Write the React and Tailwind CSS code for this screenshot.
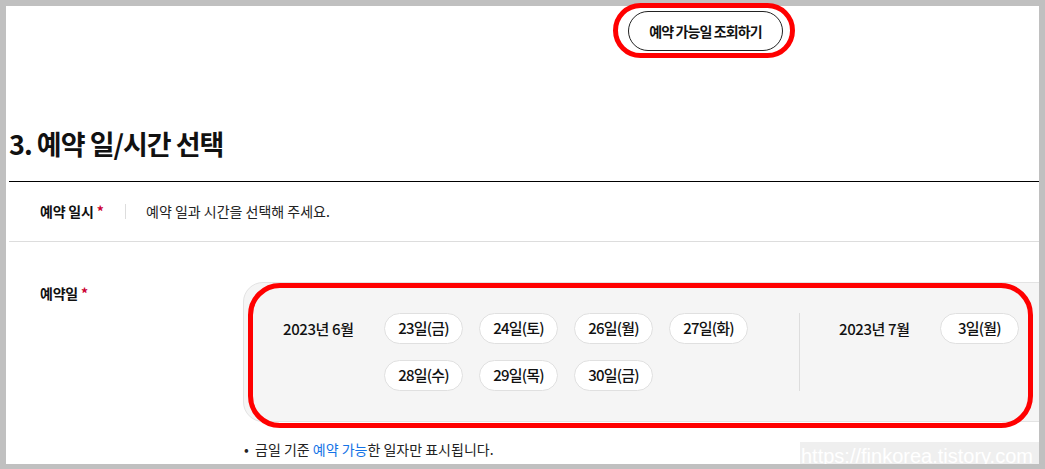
import React from "react";

const june = ["23일(금)", "24일(토)", "26일(월)", "27일(화)", "28일(수)", "29일(목)", "30일(금)"];
const july = ["3일(월)"];

function Chip({ label }) {
  return (
    <button className="h-[31px] w-[79px] rounded-full border border-[#e0e0e0] bg-white text-[15px] font-medium tracking-[-0.8px] text-[#111]">
      {label}
    </button>
  );
}

function Month({ title, days }) {
  return (
    <div className="flex shrink-0">
      <div className="w-[101px] shrink-0 text-[15px] font-medium leading-[31px] tracking-[-0.4px] text-[#111]">
        {title}
      </div>
      <div className="grid shrink-0 grid-cols-[repeat(4,79px)] gap-4">
        {days.map((d) => (
          <Chip key={d} label={d} />
        ))}
      </div>
    </div>
  );
}

export default function App() {
  return (
    <div className="relative h-[469px] w-[1045px] overflow-hidden bg-[#c0c0c0] pl-[6px] pt-[6px] font-['Noto_Sans_CJK_KR',sans-serif] text-[#111]">
      <div className="relative h-[458px] w-[1033px] overflow-hidden bg-white">
        <div className="pl-[622px] pt-[5px]">
          <button className="h-[40px] w-[155px] rounded-full border border-[#222] bg-white text-[14px] font-bold tracking-[-0.9px]">
            예약 가능일 조회하기
          </button>
        </div>

        <h2 className="mt-[75px] pl-[3px] text-[27px] font-bold leading-[36px] tracking-[-1px]">
          3. 예약 일/시간 선택
        </h2>
        <div className="ml-[3px] mt-[19px] border-t border-black" />

        <div className="ml-[3px] flex h-[60px] items-center border-b border-[#ddd] pl-[31px] text-[14px]">
          <div className="w-[85px] shrink-0 font-bold tracking-[-0.2px]">
            예약 일시 <span className="text-[#cc0033]">*</span>
          </div>
          <div className="h-[15px] w-px shrink-0 bg-[#ddd]" />
          <div className="ml-[20px] text-[#222]">예약 일과 시간을 선택해 주세요.</div>
        </div>

        <div className="flex pl-[34px] pt-[40px]">
          <div className="w-[203px] shrink-0 pt-[1px] text-[14px] font-bold leading-[20px] tracking-[-0.2px]">
            예약일 <span className="text-[#cc0033]">*</span>
          </div>
          <div className="shrink-0">
            <div className="flex w-[820px] rounded-[20px] border border-[#e3e3e3] bg-[#f5f5f5] pb-[30px] pl-[39px] pt-[30px]">
              <Month title="2023년 6월" days={june} />
              <div className="ml-[51px] mr-[39px] w-px shrink-0 bg-[#ddd]" />
              <Month title="2023년 7월" days={july} />
            </div>
            <div className="mt-[17px] flex text-[14px] leading-[20px] text-[#222]">
              <span className="w-[12px] pl-[1px]">•</span>
              <span>
                금일 기준 <span className="text-[#1473e6]">예약 가능</span>한 일자만 표시됩니다.
              </span>
            </div>
          </div>
        </div>

        <div className="absolute bottom-0 right-0 h-[22px] w-[239px] bg-[#efefef] pl-[1px] pt-[3px] font-['Liberation_Sans',sans-serif] text-[20px] leading-[22px] text-white">
          https://finkorea.tistory.com
        </div>
      </div>

      <div className="absolute left-[613px] top-[3px] h-[55px] w-[182px] rounded-full border-[5px] border-[#ff0000]" />
      <div className="absolute left-[248px] top-[283px] h-[145px] w-[785px] rounded-[32px] border-[5px] border-[#ff0000]" />
    </div>
  );
}
